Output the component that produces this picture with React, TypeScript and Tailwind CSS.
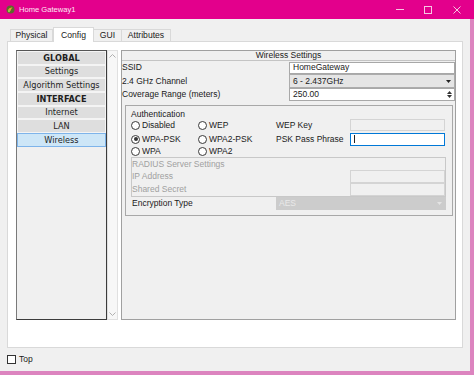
import React from "react";

function Radio({ checked, label, w }: { checked?: boolean; label: string; w: string }) {
  return (
    <div className={`flex items-center gap-[2px] ${w}`}>
      <div className="w-[9px] h-[9px] rounded-full border border-[#3a3a3a] bg-white flex items-center justify-center shrink-0">
        {checked && <div className="w-[4px] h-[4px] rounded-full bg-[#333]" />}
      </div>
      <span className="text-[8.5px] leading-none text-[#1a1a1a]">{label}</span>
    </div>
  );
}

function ListItem({ label, bold, selected }: { label: string; bold?: boolean; selected?: boolean }) {
  return (
    <div
      className={`h-[13.7px] flex items-center justify-center text-[8.2px] leading-none font-['DejaVu_Sans',sans-serif] border ${
        selected
          ? "bg-[#cde6f7] border-[#7eb4ea] text-[#1e1e1e]"
          : "bg-[#dedede] border-[#f4f4f4] text-[#1e1e1e]"
      } ${bold ? "font-bold" : ""}`}
    >
      {label}
    </div>
  );
}

export default function App() {
  return (
    <div className="w-[474px] h-[375px] bg-[#dc84bf] overflow-hidden font-['Liberation_Sans',Arial,sans-serif]">
      {/* Title bar */}
      <div className="h-[19px] bg-[#e3008c] flex items-center">
        <svg className="ml-[6px]" width="9" height="9" viewBox="0 0 9 9">
          <circle cx="4.5" cy="4.5" r="4" fill="#5b6a2c" />
          <path d="M2 5 Q3 2 6.5 2.5 Q5 3.5 4.5 6 Z" fill="#e8a030" />
          <circle cx="3" cy="6" r="1.2" fill="#9cc54a" />
        </svg>
        <span className="ml-[4px] text-[7.6px] leading-none text-[#fde8f4]">Home Gateway1</span>
        <div className="ml-auto flex h-full pr-[3px]">
          <div className="w-[28.5px] h-full flex items-center justify-center">
            <div className="w-[8px] h-px bg-[#f6c6e3]" />
          </div>
          <div className="w-[28.5px] h-full flex items-center justify-center">
            <div className="w-[8px] h-[8px] border border-[#f6c6e3]" />
          </div>
          <div className="w-[28.5px] h-full flex items-center justify-center">
            <svg width="8" height="8" viewBox="0 0 8 8">
              <path d="M0.5 0.5 L7.5 7.5 M7.5 0.5 L0.5 7.5" stroke="#f6c6e3" strokeWidth="1" />
            </svg>
          </div>
        </div>
      </div>

      {/* Window body */}
      <div className="w-[470px] h-[352px] bg-[#f0f0f0] flex flex-col pt-[8px]">
        {/* Tabs */}
        <div className="h-[14px] flex items-end pl-[10px] text-[8.6px] leading-none text-[#1a1a1a]">
          <div className="h-[12px] w-[43px] flex items-center justify-center border border-b-0 border-[#d9d9d9] bg-[#f0f0f0]">Physical</div>
          <div className="relative z-10 h-[15px] w-[41px] -mb-px flex items-center justify-center border border-b-0 border-[#d9d9d9] bg-white">Config</div>
          <div className="h-[12px] w-[28px] flex items-center justify-center border border-b-0 border-l-0 border-[#d9d9d9] bg-[#f0f0f0]">GUI</div>
          <div className="h-[12px] w-[49px] flex items-center justify-center border border-b-0 border-l-0 border-[#d9d9d9] bg-[#f0f0f0]">Attributes</div>
        </div>

        {/* Tab panel */}
        <div className="ml-[7px] w-[456px] h-[307px] bg-white border border-[#d9d9d9] flex pl-[8px] pt-[8px]">
          {/* Left list */}
          <div className="w-[91px] h-[270px] bg-[#f0f0f0] border border-[#7a7a7a] border-t-[#555] border-r-[#3c3c3c] border-b-[#3c3c3c] flex flex-col">
            <ListItem label="GLOBAL" bold />
            <ListItem label="Settings" />
            <ListItem label="Algorithm Settings" />
            <ListItem label="INTERFACE" bold />
            <ListItem label="Internet" />
            <ListItem label="LAN" />
            <ListItem label="Wireless" selected />
          </div>
          {/* Scrollbar */}
          <div className="w-[11px] h-[270px] bg-[#f7f7f7] border border-[#e0e0e0] flex flex-col items-center justify-between py-[3px]">
            <svg width="7" height="4" viewBox="0 0 7 4">
              <path d="M0.5 3.5 L3.5 0.5 L6.5 3.5" stroke="#b0b0b0" fill="none" strokeWidth="1" />
            </svg>
            <svg width="7" height="4" viewBox="0 0 7 4">
              <path d="M0.5 0.5 L3.5 3.5 L6.5 0.5" stroke="#b0b0b0" fill="none" strokeWidth="1" />
            </svg>
          </div>

          {/* Right panel */}
          <div className="ml-[3px] w-[335px] h-[270px] bg-[#f0f0f0] border border-[#a0a0a0] flex flex-col text-[8.5px] leading-none text-[#1a1a1a]">
            <div className="h-[10px] border-b border-[#c4c4c4] flex items-center justify-center">Wireless Settings</div>
            <div className="h-[13px] flex items-center">
              <span className="flex-1">SSID</span>
              <div className="w-[166px] h-[12px] bg-white border border-[#a8a8a8] flex items-center pl-[3px]">HomeGateway</div>
            </div>
            <div className="h-[14px] flex items-center">
              <span className="flex-1">2.4 GHz Channel</span>
              <div className="w-[166px] h-[14px] bg-[#e5e5e5] border border-[#acacac] flex items-center pl-[3px] pr-[3px]">
                <span className="flex-1">6 - 2.437GHz</span>
                <svg width="5" height="3" viewBox="0 0 5 3">
                  <path d="M0 0 L5 0 L2.5 3 Z" fill="#222" />
                </svg>
              </div>
            </div>
            <div className="h-[13px] flex items-center">
              <span className="flex-1">Coverage Range (meters)</span>
              <div className="w-[166px] h-[13px] bg-white border border-[#a8a8a8] flex items-center pl-[3px] pr-[2px]">
                <span className="flex-1">250.00</span>
                <div className="flex flex-col gap-[1px]">
                  <svg width="5" height="3" viewBox="0 0 5 3">
                    <path d="M0 3 L5 3 L2.5 0 Z" fill="#333" />
                  </svg>
                  <svg width="5" height="3" viewBox="0 0 5 3">
                    <path d="M0 0 L5 0 L2.5 3 Z" fill="#333" />
                  </svg>
                </div>
              </div>
            </div>

            {/* Authentication group */}
            <div className="mt-[4px] ml-[3px] w-[328px] h-[111px] border border-[#a8a8a8] flex flex-col">
              <div className="h-[12px] flex items-end pl-[5px]">Authentication</div>
              <div className="h-[14px] flex items-center pl-[5px]">
                <Radio label="Disabled" w="w-[67px]" />
                <Radio label="WEP" w="w-[78px]" />
                <span className="w-[74px]">WEP Key</span>
                <div className="w-[95px] h-[12px] bg-[#f0f0f0] border border-[#d4d4d4]" />
              </div>
              <div className="h-[14px] flex items-center pl-[5px]">
                <Radio label="WPA-PSK" w="w-[67px]" checked />
                <Radio label="WPA2-PSK" w="w-[78px]" />
                <span className="w-[74px]">PSK Pass Phrase</span>
                <div className="w-[95px] h-[13px] bg-white border border-[#0078d7] flex items-center pl-[3px]">
                  <div className="w-px h-[8px] bg-[#222]" />
                </div>
              </div>
              <div className="h-[11px] flex items-center pl-[5px]">
                <Radio label="WPA" w="w-[67px]" />
                <Radio label="WPA2" w="w-[78px]" />
              </div>

              {/* RADIUS box */}
              <div className="ml-[5px] w-[315px] h-[40px] border border-[#c8c8c8] flex flex-col text-[#a0a0a0]">
                <div className="h-[12px] flex items-center">RADIUS Server Settings</div>
                <div className="h-[13px] flex items-center">
                  <span className="flex-1">IP Address</span>
                  <div className="w-[95px] h-[13px] bg-[#f0f0f0] border border-[#d4d4d4]" />
                </div>
                <div className="h-[13px] flex items-center">
                  <span className="flex-1">Shared Secret</span>
                  <div className="w-[95px] h-[13px] bg-[#f0f0f0] border border-[#d4d4d4]" />
                </div>
              </div>
              <div className="ml-[5px] w-[315px] h-[13px] flex items-center">
                <span className="flex-1 pl-px">Encryption Type</span>
                <div className="w-[170px] h-[13px] bg-[#cccccc] flex items-center pl-[3px] pr-[4px] text-[#e9e9e9]">
                  <span className="flex-1">AES</span>
                  <svg width="5" height="3" viewBox="0 0 5 3">
                    <path d="M0 0 L5 0 L2.5 3 Z" fill="#e4e4e4" />
                  </svg>
                </div>
              </div>
            </div>
          </div>
        </div>

        {/* Top checkbox */}
        <div className="mt-[7px] ml-[7px] flex items-center gap-[3px]">
          <div className="w-[9px] h-[9px] border border-[#333] bg-white" />
          <span className="text-[8.5px] leading-none text-[#1a1a1a]">Top</span>
        </div>
      </div>
    </div>
  );
}
